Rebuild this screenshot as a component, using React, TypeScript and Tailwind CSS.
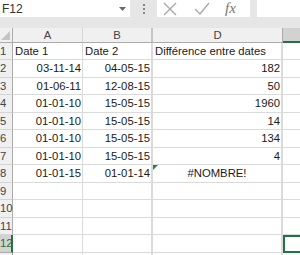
import React from "react";

const rows: { a: string; b: string; d: string; head?: boolean; center?: boolean }[] = [
  { a: "Date 1", b: "Date 2", d: "Différence entre dates", head: true },
  { a: "03-11-14", b: "04-05-15", d: "182" },
  { a: "01-06-11", b: "12-08-15", d: "50" },
  { a: "01-01-10", b: "15-05-15", d: "1960" },
  { a: "01-01-10", b: "15-05-15", d: "14" },
  { a: "01-01-10", b: "15-05-15", d: "134" },
  { a: "01-01-10", b: "15-05-15", d: "4" },
  { a: "01-01-15", b: "01-01-14", d: "#NOMBRE!", center: true },
  { a: "", b: "", d: "" },
  { a: "", b: "", d: "" },
  { a: "", b: "", d: "" },
  { a: "", b: "", d: "" },
  { a: "", b: "", d: "" },
];

const heights = ["h-[17px]", "h-[18px]"];

export default function App() {
  return (
    <div className="w-[300px] h-[255px] overflow-hidden bg-[#e6e6e6] font-['Liberation_Sans',Arial,sans-serif] text-[11.3px] text-[#1a1a1a]">
      {/* formula bar */}
      <div className="flex h-[17px]">
        <div className="w-[130px] bg-white flex items-center justify-between pl-[2px] pr-[4px] text-[12px] text-[#333]">
          <span>F12</span>
          <svg width="7" height="4" viewBox="0 0 7 4">
            <path d="M0 0h7L3.5 4z" fill="#6a6a6a" />
          </svg>
        </div>
        <div className="w-[27px] flex flex-col items-center justify-center gap-[2px]">
          <span className="w-[2px] h-[2px] bg-[#888]" />
          <span className="w-[2px] h-[2px] bg-[#888]" />
          <span className="w-[2px] h-[2px] bg-[#888]" />
        </div>
        <div className="w-[93px] bg-white flex items-center">
          <svg width="14" height="14" viewBox="0 0 14 14" className="ml-[6px]">
            <path d="M1 1l12 12M13 1L1 13" stroke="#a8a8a8" strokeWidth="1.4" />
          </svg>
          <svg width="16" height="14" viewBox="0 0 16 14" className="ml-[17px]">
            <path d="M1 7l5 5L15 1" stroke="#a8a8a8" strokeWidth="1.4" fill="none" />
          </svg>
          <span className="ml-[15px] font-['Liberation_Serif',serif] italic text-[15px] text-[#777] leading-none">
            fx
          </span>
        </div>
        <div className="w-[7px]" />
        <div className="flex-1 bg-white" />
      </div>
      <div className="h-[11px]" />

      {/* grid */}
      <div className="grid grid-cols-[13px_70px_70px_130px_40px] w-[323px] bg-white">
        {/* column headers */}
        <div className="h-[15px] bg-[#f0f0f0] border-r border-b border-[#ababab] relative">
          <svg width="9" height="9" viewBox="0 0 9 9" className="absolute right-[2px] bottom-[2px]">
            <path d="M9 0v9H0z" fill="#c4c4c4" />
          </svg>
        </div>
        <div className="h-[15px] bg-[#f0f0f0] border-r border-b border-r-[#d4d4d4] border-b-[#ababab] flex items-center justify-center text-[#444]">
          A
        </div>
        <div className="h-[15px] bg-[#f0f0f0] border-r-2 border-double border-b border-r-[#c4c4c4] border-b-[#ababab] flex items-center justify-center text-[#444]">
          B
        </div>
        <div className="h-[15px] bg-[#f0f0f0] border-r border-b border-r-[#ababab] border-b-[#ababab] flex items-center justify-center text-[#444]">
          D
        </div>
        <div className="h-[15px] bg-[#d2d2d2] border-b-2 border-[#217346]" />

        {rows.map((r, i) => {
          const h = heights[i % 2];
          const sel = i === 11;
          const align = r.head ? "justify-start pl-[2px]" : "justify-end pr-[1px]";
          return (
            <React.Fragment key={i}>
              <div
                className={`${h} flex items-center border-b ${
                  sel
                    ? "bg-[#d2d2d2] text-[#217346] border-r-2 border-r-[#217346] border-b-[#ababab]"
                    : "bg-[#f0f0f0] text-[#444] border-r border-r-[#ababab] border-b-[#d4d4d4]"
                }`}
              >
                {i < 12 ? i + 1 : ""}
              </div>
              <div className={`${h} border-r border-b border-[#dadada] flex items-center overflow-hidden whitespace-nowrap ${align}`}>
                {r.a}
              </div>
              <div className={`${h} border-r-2 border-b border-[#dadada] flex items-center overflow-hidden whitespace-nowrap ${align}`}>
                {r.b}
              </div>
              <div
                className={`${h} border-r-2 border-b border-[#dadada] flex items-center relative whitespace-nowrap ${
                  r.center ? "justify-center" : align
                }`}
              >
                {r.d}
                {r.center && (
                  <svg width="5" height="5" viewBox="0 0 5 5" className="absolute left-0 top-0">
                    <path d="M0 0h5L0 5z" fill="#1e8a3a" />
                  </svg>
                )}
              </div>
              <div
                className={`${h} ${sel ? "border-2 border-[#217346]" : "border-b border-[#dadada]"}`}
              />
            </React.Fragment>
          );
        })}
      </div>
    </div>
  );
}
